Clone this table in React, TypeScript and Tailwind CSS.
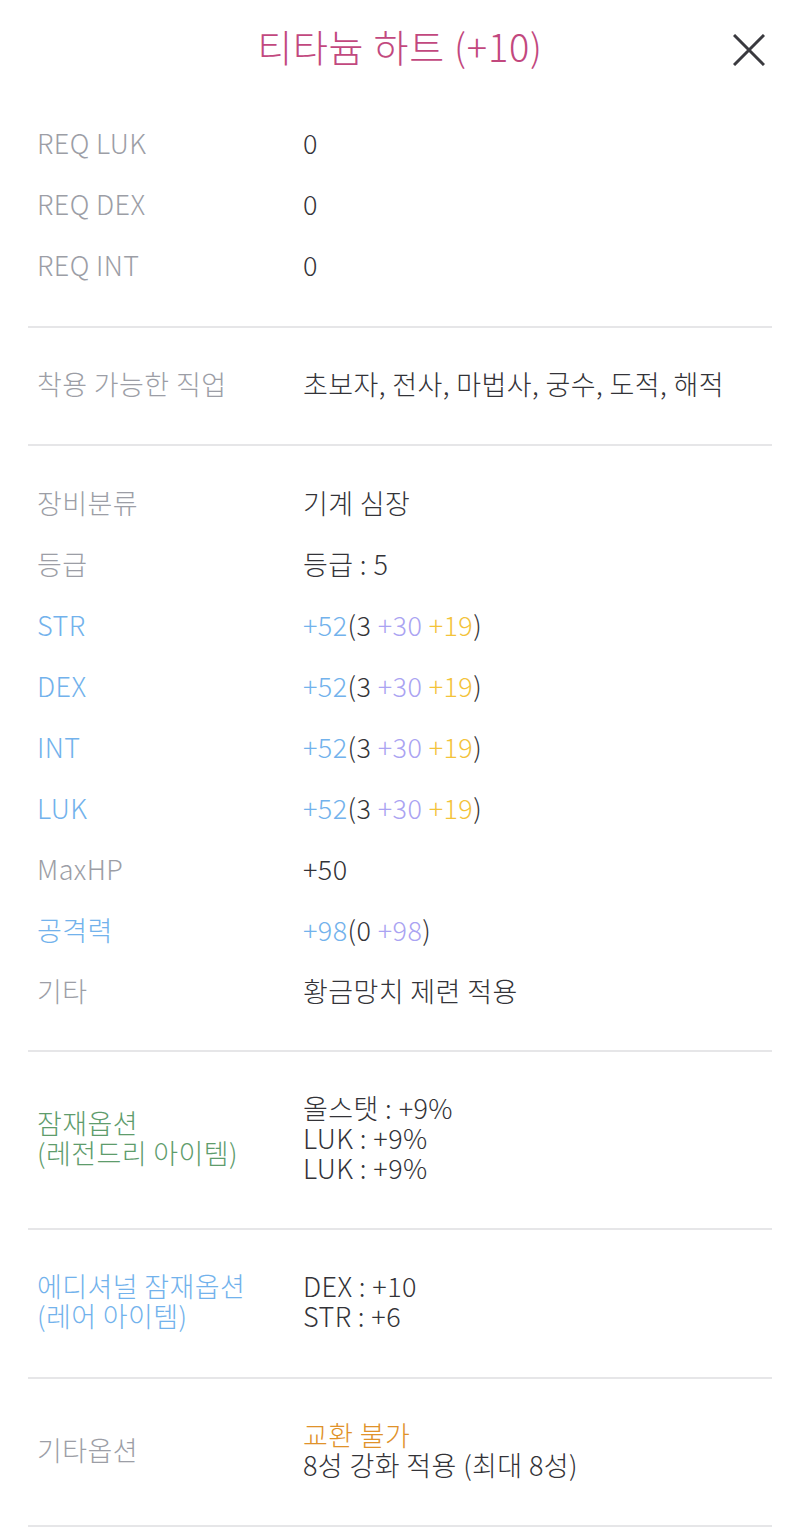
import React from "react";

type Part = { text: string; tone?: "blue" | "purple" | "yellow" | "dark" };

const toneClass: Record<string, string> = {
  blue: "text-[#72b2ec]",
  purple: "text-[#aaa3f2]",
  yellow: "text-[#f3c33a]",
  dark: "text-[#333338]",
};

const statParts: Part[] = [
  { text: "+52", tone: "blue" },
  { text: "(3 ", tone: "dark" },
  { text: "+30", tone: "purple" },
  { text: " " },
  { text: "+19", tone: "yellow" },
  { text: ")", tone: "dark" },
];

const Row: React.FC<{ label: string; labelClass?: string; children: React.ReactNode }> = ({
  label,
  labelClass = "text-[#9c9ea6]",
  children,
}) => (
  <div className="flex h-[61px] items-center">
    <div className={`w-[275px] shrink-0 pl-[9px] ${labelClass}`}>{label}</div>
    <div className="text-[#333338]">{children}</div>
  </div>
);

const Parts: React.FC<{ parts: Part[] }> = ({ parts }) => (
  <span>
    {parts.map((p, i) => (
      <span key={i} className={p.tone ? toneClass[p.tone] : ""}>
        {p.text}
      </span>
    ))}
  </span>
);

export default function App() {
  return (
    <div
      className="w-[800px] bg-white text-[27px] font-light leading-[30px] tracking-[0.015em]"
      style={{ fontFamily: '"Noto Sans CJK KR", "Noto Sans", sans-serif' }}
    >
      {/* Header */}
      <div className="relative flex h-24 items-center justify-center pb-[4px]">
        <h1 className="text-[38px] font-light tracking-[0.02em] text-[#c2487e]">티타늄 하트 (+10)</h1>
        <button className="absolute right-[35px] top-[34px] text-[#3a3a3f]">
          <svg width="32" height="32" viewBox="0 0 32 32" fill="none">
            <path d="M1 1 L31 31 M31 1 L1 31" stroke="currentColor" strokeWidth="3" />
          </svg>
        </button>
      </div>

      {/* Requirements */}
      <div className="mx-[28px] border-b-2 border-[#e6e6e8] pt-[16px] pb-[31px]">
        <Row label="REQ LUK">0</Row>
        <Row label="REQ DEX">0</Row>
        <Row label="REQ INT">0</Row>
      </div>

      <div className="mx-[28px] border-b-2 border-[#e6e6e8] pt-[25px] pb-[30px]">
        <Row label="착용 가능한 직업">초보자, 전사, 마법사, 궁수, 도적, 해적</Row>
      </div>

      <div className="mx-[28px] border-b-2 border-[#e6e6e8] pt-[26px] pb-[29px]">
        <Row label="장비분류">기계 심장</Row>
        <Row label="등급">등급 : 5</Row>
        <Row label="STR" labelClass="text-[#72b2ec]">
          <Parts parts={statParts} />
        </Row>
        <Row label="DEX" labelClass="text-[#72b2ec]">
          <Parts parts={statParts} />
        </Row>
        <Row label="INT" labelClass="text-[#72b2ec]">
          <Parts parts={statParts} />
        </Row>
        <Row label="LUK" labelClass="text-[#72b2ec]">
          <Parts parts={statParts} />
        </Row>
        <Row label="MaxHP">+50</Row>
        <Row label="공격력" labelClass="text-[#72b2ec]">
          <Parts
            parts={[
              { text: "+98", tone: "blue" },
              { text: "(0 ", tone: "dark" },
              { text: "+98", tone: "purple" },
              { text: ")", tone: "dark" },
            ]}
          />
        </Row>
        <Row label="기타">황금망치 제련 적용</Row>
      </div>

      {/* Potential */}
      <div className="mx-[28px] flex items-center border-b-2 border-[#e6e6e8] pt-[41px] pb-[45px]">
        <div className="w-[275px] shrink-0 pl-[9px] text-[#5e9c6c]">
          잠재옵션
          <br />
          (레전드리 아이템)
        </div>
        <div className="text-[#333338]">
          <div>올스탯 : +9%</div>
          <div>LUK : +9%</div>
          <div>LUK : +9%</div>
        </div>
      </div>

      <div className="mx-[28px] flex items-center border-b-2 border-[#e6e6e8] pt-[41px] pb-[46px]">
        <div className="w-[275px] shrink-0 pl-[9px] text-[#72b2ec]">
          에디셔널 잠재옵션
          <br />
          (레어 아이템)
        </div>
        <div className="text-[#333338]">
          <div>DEX : +10</div>
          <div>STR : +6</div>
        </div>
      </div>

      <div className="mx-[28px] flex items-center border-b-2 border-[#e6e6e8] pt-[41px] pb-[45px]">
        <div className="w-[275px] shrink-0 pl-[9px] text-[#9c9ea6]">기타옵션</div>
        <div>
          <div className="text-[#e0922a]">교환 불가</div>
          <div className="text-[#333338]">8성 강화 적용 (최대 8성)</div>
        </div>
      </div>
      <div className="h-[13px]" />
    </div>
  );
}
